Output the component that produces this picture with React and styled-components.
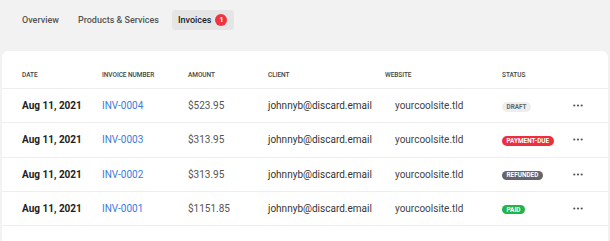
import React from 'react';
import styled, { createGlobalStyle } from 'styled-components';

const GlobalStyle = createGlobalStyle`
  html, body {
    margin: 0;
    padding: 0;
    background: #f2f2f2;
    font-family: Roboto, "Liberation Sans", sans-serif;
  }
  * { box-sizing: border-box; }
`;

const Page = styled.div`
  width: 610px;
  height: 241px;
  overflow: hidden;
  padding: 10px 2px 0;
`;

const Tabs = styled.nav`
  display: flex;
  gap: 6px;
  padding-left: 14px;
  height: 20px;
  margin-bottom: 21px;
`;

const Tab = styled.div`
  display: flex;
  align-items: center;
  gap: 4px;
  padding: 0 7px 0 6px;
  height: 20px;
  border-radius: 3px;
  font-size: 9px;
  font-weight: 500;
  color: ${p => (p.$active ? '#222' : '#555')};
  background: ${p => (p.$active ? '#e5e5e5' : 'transparent')};
`;

const Count = styled.span`
  display: inline-flex;
  align-items: center;
  justify-content: center;
  width: 12px;
  height: 12px;
  border-radius: 50%;
  background: #ef3340;
  color: #fff;
  font-size: 7px;
  font-weight: 700;
`;

const Card = styled.section`
  background: #fff;
  border-radius: 6px 6px 0 0;
  height: 200px;
  padding-top: 10px;
`;

const cols = '80px 86px 80px 117px 117px 71px 1fr';

const HeadRow = styled.div`
  display: grid;
  grid-template-columns: ${cols};
  align-items: center;
  height: 28px;
  padding-left: 20px;
  border-bottom: 1px solid #eeeeee;
`;

const HeadCell = styled.div`
  font-size: 6.5px;
  font-weight: 500;
  color: #444;
  text-transform: uppercase;
  letter-spacing: -0.05px;
`;

const Row = styled.div`
  display: grid;
  grid-template-columns: ${cols};
  align-items: center;
  height: 34.25px;
  padding-left: 20px;
  border-bottom: 1px solid #eeeeee;
`;

const Cell = styled.div`
  font-size: 10px;
  white-space: nowrap;
  color: ${p => p.$color || '#444'};
  font-weight: ${p => (p.$bold ? 700 : 400)};
  padding-left: ${p => p.$indent || 0}px;
`;

const badgeColors = {
  draft: ['#eeeeee', '#666'],
  'payment-due': ['#ee2d3d', '#fff'],
  refunded: ['#666666', '#fff'],
  paid: ['#1fb54b', '#fff'],
};

const Badge = styled.span`
  display: inline-flex;
  align-items: center;
  height: 9.5px;
  padding: 0 4.5px;
  border-radius: 5px;
  font-size: 6.4px;
  font-weight: 700;
  text-transform: uppercase;
  background: ${p => badgeColors[p.$status][0]};
  color: ${p => badgeColors[p.$status][1]};
`;

const More = styled.div`
  display: flex;
  align-items: center;
`;

const Dots = () => (
  <svg width="10" height="3" viewBox="0 0 10 3">
    <circle cx="1.3" cy="1.5" r="1.1" fill="#555" />
    <circle cx="5" cy="1.5" r="1.1" fill="#555" />
    <circle cx="8.7" cy="1.5" r="1.1" fill="#555" />
  </svg>
);

const invoices = [
  { num: 'INV-0004', amount: '$523.95', status: 'draft' },
  { num: 'INV-0003', amount: '$313.95', status: 'payment-due' },
  { num: 'INV-0002', amount: '$313.95', status: 'refunded' },
  { num: 'INV-0001', amount: '$1151.85', status: 'paid' },
];

export default function App() {
  return (
    <Page>
      <GlobalStyle />
      <Tabs>
        <Tab>Overview</Tab>
        <Tab>Products &amp; Services</Tab>
        <Tab $active>
          Invoices <Count>1</Count>
        </Tab>
      </Tabs>
      <Card>
        <HeadRow>
          <HeadCell>Date</HeadCell>
          <HeadCell>Invoice Number</HeadCell>
          <HeadCell>Amount</HeadCell>
          <HeadCell>Client</HeadCell>
          <HeadCell>Website</HeadCell>
          <HeadCell>Status</HeadCell>
          <HeadCell />
        </HeadRow>
        {invoices.map(inv => (
          <Row key={inv.num}>
            <Cell $bold $color="#222">Aug 11, 2021</Cell>
            <Cell $color="#3b7be0">{inv.num}</Cell>
            <Cell $color="#555">{inv.amount}</Cell>
            <Cell $color="#333">johnnyb@discard.email</Cell>
            <Cell $color="#444" $indent={10}>yourcoolsite.tld</Cell>
            <Cell>
              <Badge $status={inv.status}>{inv.status}</Badge>
            </Cell>
            <More>
              <Dots />
            </More>
          </Row>
        ))}
      </Card>
    </Page>
  );
}
